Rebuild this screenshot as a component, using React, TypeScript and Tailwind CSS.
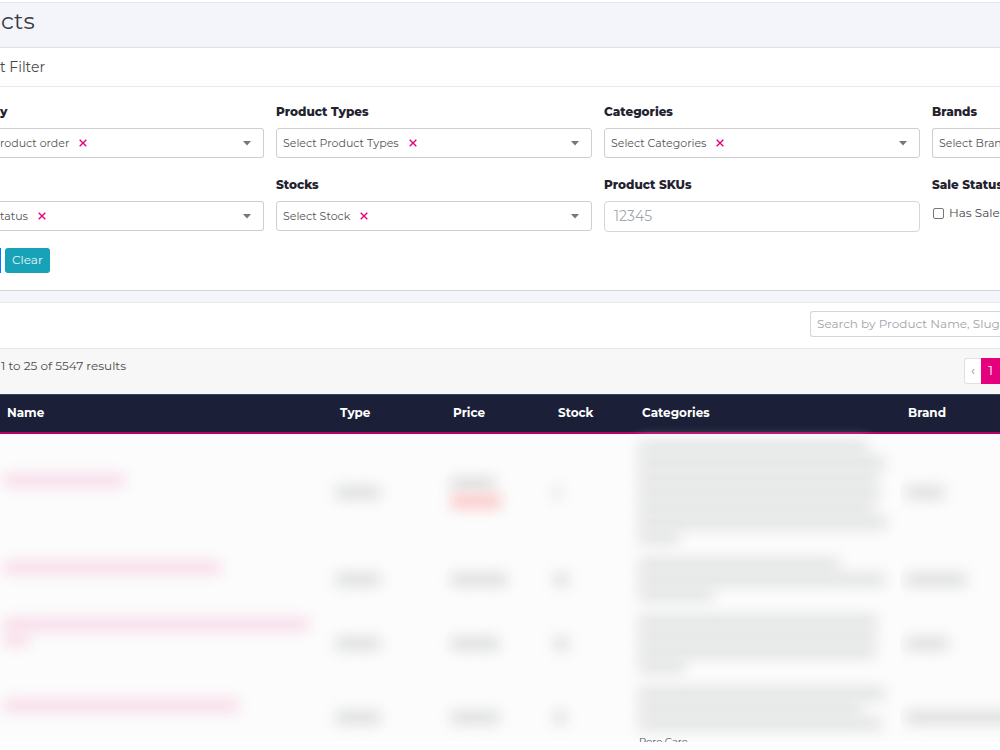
import React from "react";

function Bar({ w, tone = "bg-[#dcdddd]" }: { w: number; tone?: string }) {
  return (
    <span className="flex h-[15px] items-center">
      <span className={`block h-[13px] shrink-0 blur-[7px] ${tone}`} style={{ width: w }} />
    </span>
  );
}

function Label({ htmlFor, children }: { htmlFor: string; children: React.ReactNode }) {
  return (
    <label htmlFor={htmlFor} className="block h-5 text-[12px] leading-5 font-extrabold whitespace-nowrap text-[#23232f]">
      {children}
    </label>
  );
}

function Cross() {
  return (
    <svg viewBox="0 0 8 8" className="size-2 stroke-[#e5007d]" strokeWidth="1.4" aria-hidden="true">
      <path d="M0.7 0.7 L7.3 7.3 M7.3 0.7 L0.7 7.3" />
    </svg>
  );
}

type PickerProps = { id: string; label: string; value: string; edge?: "left" | "right" };

function Picker({ id, label, value, edge }: PickerProps) {
  const frame =
    edge === "left" ? "rounded-r-[3px] border-r" : edge === "right" ? "rounded-l-[3px] border-l" : "rounded-[3px] border-x";
  return (
    <div className="min-w-0">
      <Label htmlFor={id}>{label}</Label>
      <button
        id={id}
        className={`mt-[6px] flex h-[30px] w-full items-center overflow-hidden border-y border-[#cfcfd2] bg-white text-[11px] whitespace-nowrap text-[#555] ${frame} ${edge === "left" ? "pl-0" : "pl-[6px]"}`}
      >
        <span>{value}</span>
        {edge !== "right" && (
          <>
            <span className="ml-[10px]"><Cross /></span>
            <svg viewBox="0 0 8 5" className="mr-3 ml-auto h-[5px] w-2 fill-[#77777b]" aria-hidden="true">
              <path d="M0 0 H8 L4 4.5 Z" />
            </svg>
          </>
        )}
      </button>
    </div>
  );
}

const rows = [
  { name: [120], type: 44, price: [44, 50], stock: 6, cats: [228, 246, 238, 240, 234, 248, 40], brand: 38 },
  { name: [216], type: 44, price: [56], stock: 14, cats: [200, 246, 74], brand: 60 },
  { name: [304, 24], type: 44, price: [48], stock: 14, cats: [238, 236, 236, 46], brand: 42 },
  { name: [234], type: 44, price: [48], stock: 12, cats: [246, 222, 242], brand: 110, note: "Pore Care" },
];

export default function App() {
  return (
    <div className="min-h-screen overflow-hidden bg-white font-['Montserrat',Inter,sans-serif] text-[#4a4a4a]">
      <header className="mt-[2px] flex h-[46px] items-center border-y border-[#e4e5ea] bg-[#f4f5fa] pb-[9px] pl-px">
        <h1 className="text-[23px] leading-7 text-[#3a3a42]">cts</h1>
      </header>

      <section className="border-b border-[#d4d5d8] shadow-sm">
        <h2 className="flex h-[39px] items-center border-b border-[#e9e9ec] text-[14px]">t Filter</h2>
        <div className="grid grid-cols-[264fr_316fr_316fr_68fr] gap-x-3 gap-y-[17px] pt-[15px]">
          <Picker id="sort" label="y" value="roduct order" edge="left" />
          <Picker id="types" label="Product Types" value="Select Product Types" />
          <Picker id="categories" label="Categories" value="Select Categories" />
          <Picker id="brands" label="Brands" value="Select Brands" edge="right" />
          <Picker id="status" label="" value="tatus" edge="left" />
          <Picker id="stocks" label="Stocks" value="Select Stock" />
          <div>
            <Label htmlFor="skus">Product SKUs</Label>
            <input
              id="skus"
              placeholder="12345"
              className="mt-[6px] block h-[31px] w-full rounded-[4px] border border-[#d3d6db] px-[9px] pb-px text-[14px] placeholder:text-[#a2a7ac]"
            />
          </div>
          <div className="min-w-0">
            <Label htmlFor="sale">Sale Status</Label>
            <div className="mt-2 flex items-center gap-[5px] overflow-hidden whitespace-nowrap">
              <input id="sale" type="checkbox" className="ml-px size-[11px] shrink-0 appearance-none rounded-[2px] border border-[#767676] bg-white" />
              <span className="text-[12px] leading-5">Has Sale</span>
            </div>
          </div>
        </div>
        <div className="flex gap-1 pt-4 pb-[17px]">
          <span className="w-px bg-[#007bff]" />
          <button className="h-[25px] rounded-[3px] bg-[#17a2b8] px-[7px] pb-px text-[12px] text-[#e4f5f8]">Clear</button>
        </div>
      </section>

      <div className="h-[11px] bg-[#f4f5fa]" />

      <section>
        <div className="flex h-[46px] justify-end border-t border-[#e6e7ec] pt-2">
          <input
            aria-label="Search products"
            placeholder="Search by Product Name, Slug, SKU"
            className="h-[26px] w-[19%] rounded-l-[3px] border-y border-l border-[#d3d6db] pb-px pl-[6px] text-[12px] placeholder:text-[#9fa4a9]"
          />
        </div>
        <div className="flex h-[46px] justify-between border-t border-[#e6e6e8] bg-[#f7f7f7]">
          <p className="pt-[7px] pl-px text-[12px] leading-5">1 to 25 of 5547 results</p>
          <nav aria-label="Pages" className="mt-[9px] flex h-[26px] text-[13px]">
            <button className="w-[17px] rounded-l-[3px] border border-r-0 border-[#dee2e6] bg-white text-[#8a8f94]">‹</button>
            <button className="w-[19px] bg-[#e5007d] text-white">1</button>
          </nav>
        </div>

        <div className="max-h-[348px] overflow-hidden bg-[#fcfcfc]">
          <table className="w-full table-fixed border-collapse">
            <thead>
              <tr className="h-[38px] border-t border-b-2 border-t-[#39445a] border-b-[#b8006b] bg-[#1b2038] text-left text-[12px] font-extrabold text-white">
                <th className="w-[33.2%] pl-[7px]">Name</th>
                <th className="w-[11.3%] pl-2">Type</th>
                <th className="w-[10.5%] pl-2">Price</th>
                <th className="w-[8.4%] pl-2">Stock</th>
                <th className="w-[26.6%] pl-2">Categories</th>
                <th className="w-[10%] pl-2">Brand</th>
              </tr>
            </thead>
            <tbody>
              {rows.map((row, i) => (
                <tr key={i} className="align-middle">
                  <td className="pb-6 pl-1">
                    {row.name.map((w, n) => <Bar key={n} w={w} tone="bg-[#f8d9e8]" />)}
                  </td>
                  <td className="pl-1"><Bar w={row.type} /></td>
                  <td className="pl-[6px]">
                    <div className="flex flex-col gap-[3px]">
                      {row.price.map((w, n) => <Bar key={n} w={w} tone={n ? "bg-[#fcc4c4]" : "bg-[#dcdddd]"} />)}
                    </div>
                  </td>
                  <td className="pl-1"><Bar w={row.stock} /></td>
                  <td className="py-[6px] pl-[5px]">
                    {row.cats.map((w, n) => <Bar key={n} w={w} tone="bg-[#e1e2e2]" />)}
                    {row.note && <span className="block pt-[3px] text-[10px] leading-[15px]">{row.note}</span>}
                  </td>
                  <td className="overflow-hidden pl-[6px]"><Bar w={row.brand} /></td>
                </tr>
              ))}
            </tbody>
          </table>
        </div>
      </section>
    </div>
  );
}
